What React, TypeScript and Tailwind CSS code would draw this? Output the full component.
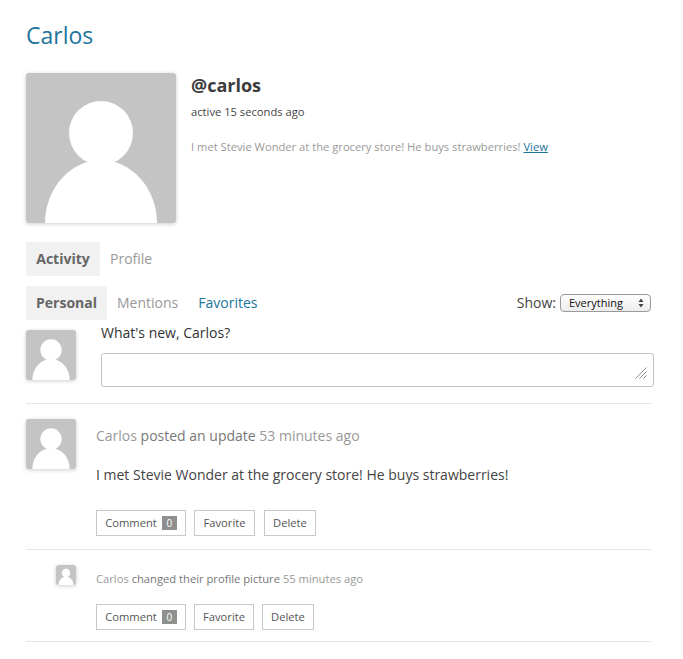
const font = { fontFamily: '"Open Sans", sans-serif' };

function Avatar({ size, className = "" }: { size: number; className?: string }) {
  return (
    <svg
      viewBox="0 0 150 150"
      width={size}
      height={size}
      className={"shrink-0 rounded-[3px] bg-[#c4c4c4] shadow-[0_1px_4px_rgba(0,0,0,0.2)] " + className}
    >
      <circle cx="75" cy="60" r="32" fill="#fff" />
      <path d="M19 150 C19 115 45 87 75 87 C105 87 131 115 131 150 Z" fill="#fff" />
    </svg>
  );
}

function ActionButton({ label, count, className = "" }: { label: string; count?: number; className?: string }) {
  return (
    <button className={"h-[26px] flex items-center justify-center border border-[#c9c9c9] text-[11.2px] text-[#555] " + className}>
      {label}
      {count !== undefined && (
        <span className="ml-[5px] w-[15px] h-[14px] bg-[#8f8f8f] text-white text-[10px] leading-[14px] text-center">{count}</span>
      )}
    </button>
  );
}

export default function App() {
  return (
    <div className="w-[683px] h-[659px] bg-white overflow-hidden pl-[26px] pr-[32px] pt-[19px] antialiased text-[#333]" style={font}>
      <h1 className="text-[23px] leading-[32px] text-[#21759b]">Carlos</h1>

      <div className="flex mt-[22px]">
        <Avatar size={150} />
        <div className="ml-[15px]">
          <div className="text-[18px] leading-[24px] font-bold text-[#3c3c3c]">@carlos</div>
          <div className="text-[11.2px] leading-[16px] mt-[7px] text-[#444]">active 15 seconds ago</div>
          <div className="text-[11.2px] leading-[16px] mt-[19px] text-[#999]">
            I met Stevie Wonder at the grocery store! He buys strawberries!{" "}
            <span className="text-[#21759b] underline">View</span>
          </div>
        </div>
      </div>

      <div className="flex mt-[19px] text-[14px] leading-[34px]">
        <div className="w-[74px] text-center bg-[#f1f1f1] font-bold text-[#666]">Activity</div>
        <div className="ml-[10px] text-[#999]">Profile</div>
      </div>

      <div className="flex items-center mt-[10px] text-[14px] leading-[34px]">
        <div className="w-[81px] text-center bg-[#f1f1f1] font-bold text-[#666]">Personal</div>
        <div className="ml-[10px] text-[#999]">Mentions</div>
        <div className="ml-[20px] text-[#21759b]">Favorites</div>
        <div className="ml-auto flex items-center">
          <span className="text-[14px] text-[#444]">Show:</span>
          <div className="ml-[4px] w-[91px] h-[18px] flex items-center justify-between pl-[8px] pr-[6px] pb-[1px] rounded-[4px] border border-[#9a9a9a] bg-gradient-to-b from-white to-[#ececec] text-[11px] leading-none text-[#111]">
            Everything
            <svg width="6" height="10" viewBox="0 0 6 10" fill="#444">
              <path d="M3 0.5 L5.5 4 L0.5 4 Z M3 9.5 L0.5 6 L5.5 6 Z" />
            </svg>
          </div>
        </div>
      </div>

      <div className="flex mt-[10px] border-b border-[#e6e6e6] pb-[16px] w-[625px]">
        <Avatar size={50} />
        <div className="ml-[25px] -mt-[7px]">
          <div className="text-[14px] leading-[20px] text-[#333]">What's new, Carlos?</div>
          <div className="relative w-[553px] h-[34px] mt-[10px] rounded-[3px] border border-[#c4c4c4]">
            <svg width="12" height="12" viewBox="0 0 12 12" stroke="#8a8a8a" className="absolute right-[6px] bottom-[7px]">
              <path d="M0.5 11.5 L11.5 0.5 M4.5 11.5 L11.5 4.5 M8.5 11.5 L11.5 8.5" />
            </svg>
          </div>
        </div>
      </div>

      <div className="w-[625px] border-b border-[#e6e6e6] pt-[15px] pb-[13px]">
        <div className="flex">
          <Avatar size={50} />
          <div className="ml-[20px] text-[14px] leading-[20px] mt-[7px] text-[#777]">
            <span className="text-[#999]">Carlos</span> posted an update <span className="text-[#999]">53 minutes ago</span>
          </div>
        </div>
        <div className="ml-[70px] -mt-[4px] text-[14px] leading-[20px] text-[#444]">
          I met Stevie Wonder at the grocery store! He buys strawberries!
        </div>
        <div className="flex ml-[70px] mt-[25px]">
          <ActionButton label="Comment" count={0} className="w-[90px]" />
          <ActionButton label="Favorite" className="w-[61px] ml-[8px]" />
          <ActionButton label="Delete" className="w-[52px] ml-[9px]" />
        </div>
      </div>

      <div className="w-[625px] border-b border-[#e6e6e6] pt-[15px] pb-[11px]">
        <div className="flex">
          <Avatar size={20} className="ml-[30px]" />
          <div className="ml-[20px] mt-[6px] text-[11.2px] leading-[16px] text-[#777]">
            <span className="text-[#999]">Carlos</span> changed their profile picture <span className="text-[#999]">55 minutes ago</span>
          </div>
        </div>
        <div className="flex ml-[70px] mt-[17px]">
          <ActionButton label="Comment" count={0} className="w-[90px]" />
          <ActionButton label="Favorite" className="w-[60px] ml-[8px]" />
          <ActionButton label="Delete" className="w-[52px] ml-[8px]" />
        </div>
      </div>
    </div>
  );
}
